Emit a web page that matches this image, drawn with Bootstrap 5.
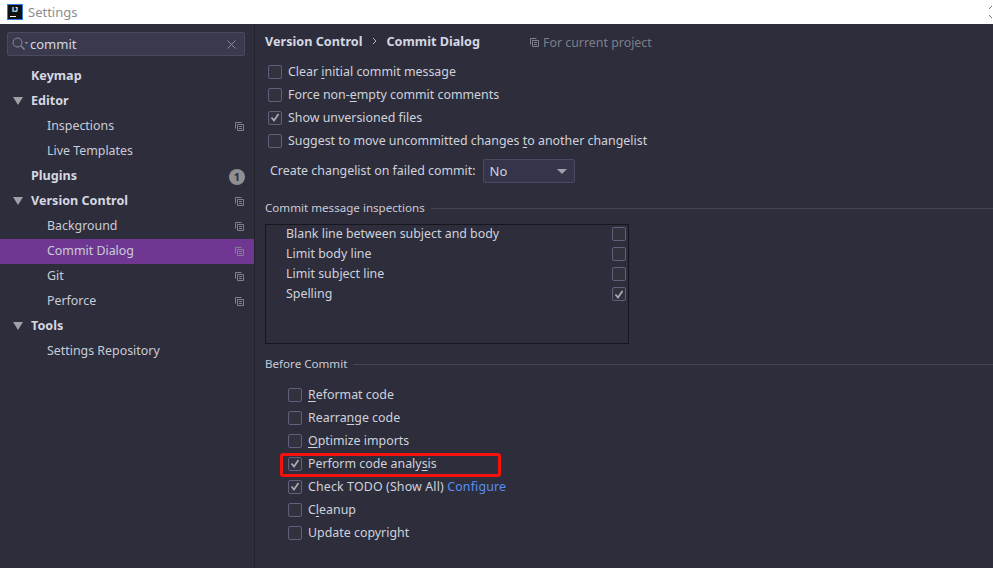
<!DOCTYPE html>
<html lang="en"><head><meta charset="utf-8"><title>Settings</title>
<link href="https://cdn.jsdelivr.net/npm/bootstrap@5.3.0/dist/css/bootstrap.min.css" rel="stylesheet">
<style>
html,body{height:568px;overflow:hidden}
body{background:#2d2d3b;color:#cfd2dc;font:12.4px/18px "Noto Sans",sans-serif}
u{text-underline-offset:2px;text-decoration-thickness:1px}
.tbar{height:24px;background:#fff;color:#8d8d8d;font-size:13px}
.ij{width:16px;height:16px;background:#111;border:1px solid #2a7de1;color:#fff;font:bold 7px/9px "Liberation Sans",sans-serif;margin-left:7px;margin-right:5px;text-align:center;position:relative}
.ij::after{content:"";position:absolute;left:2px;bottom:2px;width:6px;height:1px;background:#fff}
.side{width:255px;height:544px;border-right:1px solid #22222d;flex:none}
.sbox{height:24px;margin:8px 9px 8px 7px;background:#3a3a4e;border:1px solid #4a4a5e;border-radius:2px;color:#d5d7e0;padding-left:4px;font-size:13px}
.srow{height:25px;padding-right:10px;color:#c9ccd8}
.srow.act{background:#6f3791}
.srow b{font-weight:700;color:#d5d7e2;margin-left:31px;font-size:12.6px;margin-top:-2px}
.srow .sub{margin-left:47px;margin-top:-2px}
.arrow{width:0;height:0;border-left:5px solid transparent;border-right:5px solid transparent;border-top:8px solid #a0a0a8;margin:-2px -23px 0 13px}
.cnt{width:16px;height:16px;border-radius:50%;background:#8f8f96;color:#2d2d3b;font:700 11px/16px "Noto Sans",sans-serif;text-align:center}
.main{padding:0 0 0 10px;min-width:0}
.crumb{height:36px;padding-bottom:3px;font-weight:700;color:#d5d7e2;font-size:12.65px}
.scope{color:#7d7f8d;margin-left:50px;margin-top:4px;font-size:12.4px}
.chk{height:23px;color:#cfd2dc}
.box{width:14px;height:14px;border:1px solid #625e7c;border-radius:2px;background:#32323f;flex:none;display:flex;align-items:center;justify-content:center}
.pl1{padding-left:3px}.pl2{padding-left:23px}
.tgt{margin-left:6px}
.wide{letter-spacing:.14px}
.combo{width:92px;height:24px;background:#34344a;border:1px solid #4a4a62;border-radius:2px;margin-left:7px;padding:0 7px 0 6px;font-size:13px}
.caret{width:0;height:0;border-left:5px solid transparent;border-right:5px solid transparent;border-top:5px solid #a0a0a8}
.grp{height:18px;color:#c9ccd8;font-size:11.6px}
.grp::after{content:"";flex:1;border-top:1px solid #454556;margin-left:6px}
.tablebox{width:364px;height:120px;border:1px solid #16161f;margin:7px 0 11px}
.tr{height:20px;padding:0 2px 0 20px}
.cfg{color:#5a8ef0}
.hl{position:absolute;left:280px;top:453px;width:221px;height:24px;border:3px solid #f5110c;border-radius:3px}
</style></head><body>
<div class="tbar d-flex align-items-center"><span class="ij">IJ</span><span>Settings</span>
<svg class="ms-auto" width="4" height="12" viewBox="0 0 4 12"><path d="M0 3l3-3M0 9l3 3" stroke="#777" fill="none"/></svg></div>
<div class="d-flex">
<div class="side">
<div class="sbox d-flex align-items-center">
<svg width="17" height="14" viewBox="0 0 17 14"><circle cx="5.5" cy="5.5" r="4.5" fill="none" stroke="#8b8c98"/><path d="M9 9l3.5 3.5" stroke="#8b8c98" stroke-width="1.2"/><path d="M12.5 5h4l-2 2z" fill="#8b8c98"/></svg>
<span style="margin-left:1px">commit</span>
<svg class="ms-auto me-2" width="9" height="9" viewBox="0 0 9 9"><path d="M.5.5l8 8M8.5.5l-8 8" stroke="#8b8c98"/></svg>
</div>
<div class="srow d-flex align-items-center"><b>Keymap</b></div>
<div class="srow d-flex align-items-center"><span class="arrow"></span><b>Editor</b></div>
<div class="srow d-flex align-items-center"><span class="sub">Inspections</span><svg class="ms-auto" width="9" height="9" viewBox="0 0 9 9"><use href="#cp"/></svg></div>
<div class="srow d-flex align-items-center"><span class="sub">Live Templates</span></div>
<div class="srow d-flex align-items-center"><b>Plugins</b><span class="cnt ms-auto" style="margin-right:-1px">1</span></div>
<div class="srow d-flex align-items-center"><span class="arrow"></span><b>Version Control</b><svg class="ms-auto" width="9" height="9" viewBox="0 0 9 9"><use href="#cp"/></svg></div>
<div class="srow d-flex align-items-center"><span class="sub">Background</span><svg class="ms-auto" width="9" height="9" viewBox="0 0 9 9"><use href="#cp"/></svg></div>
<div class="srow act d-flex align-items-center"><span class="sub">Commit Dialog</span><svg class="ms-auto" width="9" height="9" viewBox="0 0 9 9"><use href="#cp"/></svg></div>
<div class="srow d-flex align-items-center"><span class="sub">Git</span><svg class="ms-auto" width="9" height="9" viewBox="0 0 9 9"><use href="#cp"/></svg></div>
<div class="srow d-flex align-items-center"><span class="sub">Perforce</span><svg class="ms-auto" width="9" height="9" viewBox="0 0 9 9"><use href="#cp"/></svg></div>
<div class="srow d-flex align-items-center"><span class="arrow"></span><b>Tools</b></div>
<div class="srow d-flex align-items-center"><span class="sub">Settings Repository</span></div>
</div>
<div class="main flex-grow-1">
<div class="crumb d-flex align-items-center"><span>Version Control</span><svg width="5" height="8" viewBox="0 0 5 8" style="margin:0 9px 0 10px"><path d="M1 1l3 3-3 3" fill="none" stroke="#b0b2bc"/></svg><span>Commit Dialog</span>
<span class="scope d-flex align-items-center fw-normal"><svg width="9" height="9" viewBox="0 0 9 9" class="me-1"><use href="#cp"/></svg>For current project</span></div>
<div class="pl1">
<div class="chk d-flex align-items-center"><span class="box"></span><span class="tgt">Clear <u>i</u>nitial commit message</span></div>
<div class="chk d-flex align-items-center"><span class="box"></span><span class="tgt">Force non-<u>e</u>mpty commit comments</span></div>
<div class="chk d-flex align-items-center"><span class="box"><svg width="10" height="9" viewBox="0 0 10 9"><use href="#ck"/></svg></span><span class="tgt">Show unversioned files</span></div>
<div class="chk d-flex align-items-center"><span class="box"></span><span class="tgt">Suggest to move uncommitted changes <u>t</u>o another changelist</span></div>
<div class="d-flex align-items-center" style="height:24px;margin-top:7px">
<span style="margin-left:2px">Create changelist on failed commit:</span>
<div class="combo d-flex align-items-center justify-content-between"><span>No</span><span class="caret"></span></div></div>
</div>
<div class="grp d-flex align-items-center" style="margin-top:16px">Commit message inspections</div>
<div class="tablebox">
<div class="tr d-flex align-items-center justify-content-between" style="margin-top:-1px"><span>Blank line between subject and body</span><span class="box"></span></div>
<div class="tr d-flex align-items-center justify-content-between"><span>Limit body line</span><span class="box"></span></div>
<div class="tr d-flex align-items-center justify-content-between"><span>Limit subject line</span><span class="box"></span></div>
<div class="tr d-flex align-items-center justify-content-between"><span>Spelling</span><span class="box"><svg width="10" height="9" viewBox="0 0 10 9"><use href="#ck"/></svg></span></div>
</div>
<div class="grp d-flex align-items-center">Before Commit</div>
<div class="pl2" style="margin-top:10px">
<div class="chk d-flex align-items-center"><span class="box"></span><span class="tgt"><u>R</u>eformat code</span></div>
<div class="chk d-flex align-items-center"><span class="box"></span><span class="tgt">Rearra<u>n</u>ge code</span></div>
<div class="chk d-flex align-items-center"><span class="box"></span><span class="tgt"><u>O</u>ptimize imports</span></div>
<div class="chk d-flex align-items-center"><span class="box"><svg width="10" height="9" viewBox="0 0 10 9"><use href="#ck"/></svg></span><span class="tgt">Perform code analy<u>s</u>is</span></div>
<div class="chk d-flex align-items-center"><span class="box"><svg width="10" height="9" viewBox="0 0 10 9"><use href="#ck"/></svg></span><span class="tgt wide">Check TODO (Show All) <span class="cfg">Configure</span></span></div>
<div class="chk d-flex align-items-center"><span class="box"></span><span class="tgt">C<u>l</u>eanup</span></div>
<div class="chk d-flex align-items-center"><span class="box"></span><span class="tgt">Update copyright</span></div>
</div>
</div>
</div>
<div class="hl"></div>
<svg width="0" height="0" class="position-absolute"><defs>
<g id="cp" fill="none" stroke="#7f8090"><path d="M.5 6.5v-6h6"/><path d="M2.5 2.5h6v6h-6z"/><path d="M4 4.5h3M4 6.5h3"/></g>
<path id="ck" d="M1.5 4.5l2.5 3L8.5 1" fill="none" stroke="#a9a9b4" stroke-width="1.8"/>
</defs></svg>
</body></html>
